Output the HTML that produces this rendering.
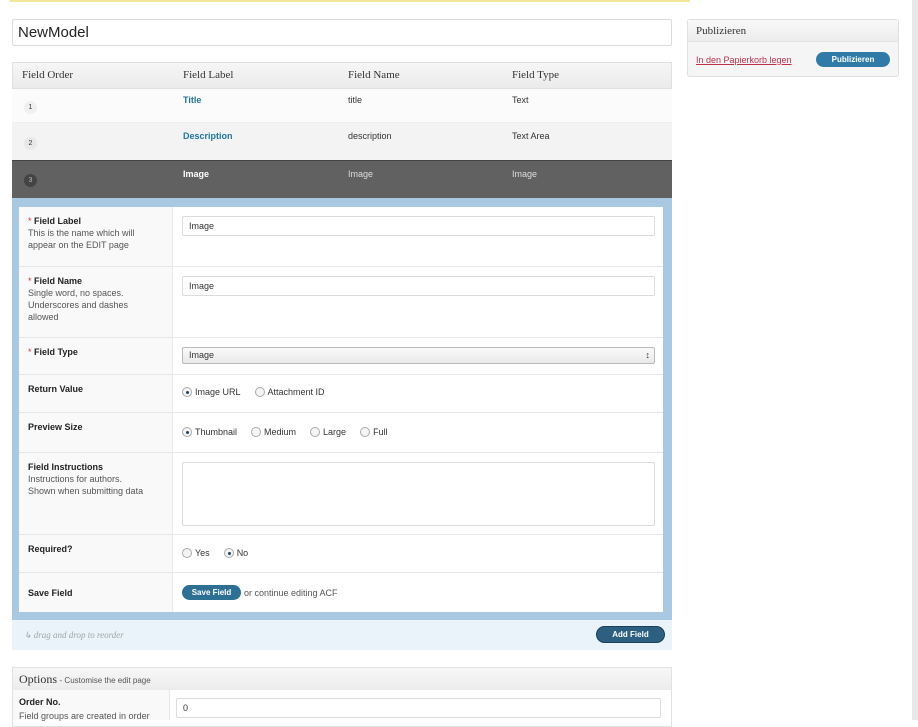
<!DOCTYPE html>
<html><head><meta charset="utf-8"><style>
*{box-sizing:border-box;margin:0;padding:0}
body{width:918px;height:720px;overflow:hidden;background:#fff;font-family:"Liberation Sans",sans-serif;font-size:9px;color:#333;position:relative}
.a{position:absolute}
.serif{font-family:"Liberation Serif",serif}
.inp{position:absolute;background:#fff;border:1px solid #dcdcdc;border-radius:2px;padding-left:6px;font-size:9px;color:#333}
.row{position:absolute;left:19px;width:644px;border-bottom:1px solid #e6e6e6;background:#fff}
.row .l{position:absolute;left:0;top:0;bottom:0;width:154px;background:#f9f9f9;border-right:1px solid #e9e9e9;padding:8px 24px 8px 9px;color:#555;line-height:12px}
.row .l b{color:#222;font-size:9px}
.st{color:#c33}
.rad{display:inline-block;width:10px;height:10px;border:1px solid #aaa;border-radius:50%;vertical-align:-2px;margin-right:3px;background:#f4f4f4;position:relative}
.rad.on::after{content:"";position:absolute;left:3px;top:3px;width:3px;height:3px;border-radius:50%;background:#246}
.opts{position:absolute;left:182px;font-size:9px;color:#333}
.opts span{margin-right:14px}
</style></head><body>
<div class="a" style="left:10px;top:0;width:680px;height:2px;background:#f2e69a"></div>
<div class="a" style="left:912px;top:0;width:6px;height:720px;background:#e8e8e8"></div>
<div class="inp" style="left:12px;top:19px;width:660px;height:27px;font-size:15px;line-height:25px;padding-left:5px;color:#222">NewModel</div>

<div class="a" style="left:12px;top:62px;width:660px;height:27px;background:linear-gradient(#f6f6f6,#ebebeb);border:1px solid #e0e0e0"></div>
<div class="a serif" style="left:22px;top:69px;font-size:11px;color:#333">Field Order</div>
<div class="a serif" style="left:183px;top:69px;font-size:11px;color:#333">Field Label</div>
<div class="a serif" style="left:348px;top:69px;font-size:11px;color:#333">Field Name</div>
<div class="a serif" style="left:512px;top:69px;font-size:11px;color:#333">Field Type</div>

<div class="a" style="left:12px;top:89px;width:660px;height:34px;background:#fbfbfb;border-bottom:1px solid #eee"></div>
<div class="a" style="left:24px;top:101px;width:13px;height:13px;border-radius:50%;background:#f0f0f0;font-size:7px;text-align:center;line-height:13px">1</div>
<div class="a" style="left:183px;top:95px;color:#21759b;font-weight:bold">Title</div>
<div class="a" style="left:348px;top:95px">title</div>
<div class="a" style="left:512px;top:95px">Text</div>

<div class="a" style="left:12px;top:123px;width:660px;height:37px;background:#f3f3f3"></div>
<div class="a" style="left:24px;top:137px;width:13px;height:13px;border-radius:50%;background:#e8e8e8;font-size:7px;text-align:center;line-height:13px">2</div>
<div class="a" style="left:183px;top:131px;color:#21759b;font-weight:bold">Description</div>
<div class="a" style="left:348px;top:131px">description</div>
<div class="a" style="left:512px;top:131px">Text Area</div>

<div class="a" style="left:12px;top:160px;width:660px;height:38px;background:#616161;border-top:1px solid #444"></div>
<div class="a" style="left:24px;top:174px;width:13px;height:13px;border-radius:50%;background:#444;color:#bbb;font-size:7px;text-align:center;line-height:13px">3</div>
<div class="a" style="left:183px;top:169px;color:#fff;font-weight:bold">Image</div>
<div class="a" style="left:348px;top:169px;color:#ddd">Image</div>
<div class="a" style="left:512px;top:169px;color:#ddd">Image</div>

<div class="a" style="left:12px;top:198px;width:660px;height:422px;background:#a9c9e2"></div>
<div class="a" style="left:19px;top:207px;width:644px;height:405px;background:#fff"></div>

<div class="row" style="top:207px;height:60px"><div class="l"><span class="st">*</span> <b>Field Label</b><br>This is the name which will appear on the EDIT page</div></div>
<div class="inp" style="left:182px;top:216px;width:473px;height:20px;line-height:18px">Image</div>
<div class="row" style="top:267px;height:71px"><div class="l"><span class="st">*</span> <b>Field Name</b><br>Single word, no spaces. Underscores and dashes allowed</div></div>
<div class="inp" style="left:182px;top:276px;width:473px;height:20px;line-height:18px">Image</div>
<div class="row" style="top:338px;height:37px"><div class="l"><span class="st">*</span> <b>Field Type</b></div></div>
<div class="inp" style="left:182px;top:347px;width:473px;height:17px;line-height:15px;background:linear-gradient(#fafafa,#e9e9e9);border-color:#bbb">Image<span style="position:absolute;right:4px;top:0">&#8597;</span></div>
<div class="row" style="top:375px;height:38px"><div class="l"><b>Return Value</b></div></div>
<div class="opts" style="top:387px"><span><i class="rad on"></i>Image URL</span><span><i class="rad"></i>Attachment ID</span></div>
<div class="row" style="top:413px;height:40px"><div class="l"><b>Preview Size</b></div></div>
<div class="opts" style="top:427px"><span><i class="rad on"></i>Thumbnail</span><span><i class="rad"></i>Medium</span><span><i class="rad"></i>Large</span><span><i class="rad"></i>Full</span></div>
<div class="row" style="top:453px;height:82px"><div class="l"><b>Field Instructions</b><br>Instructions for authors. Shown when submitting data</div></div>
<div class="inp" style="left:182px;top:462px;width:473px;height:64px"></div>
<div class="row" style="top:535px;height:38px"><div class="l"><b>Required?</b></div></div>
<div class="opts" style="top:548px"><span><i class="rad"></i>Yes</span><span><i class="rad on"></i>No</span></div>
<div class="row" style="top:573px;height:39px;border-bottom:none"><div class="l" style="padding-top:14px"><b>Save Field</b></div></div>
<div class="a" style="left:182px;top:585px;width:59px;height:15px;border-radius:8px;background:#2e6f94;color:#fff;font-weight:bold;font-size:8px;text-align:center;line-height:15px">Save Field</div>
<div class="a" style="left:244px;top:588px;color:#555">or continue editing ACF</div>

<div class="a" style="left:12px;top:620px;width:660px;height:30px;background:#eaf2fa"></div>
<div class="a serif" style="left:24px;top:630px;color:#9aa;font-style:italic;font-size:9px">&#8627; drag and drop to reorder</div>
<div class="a" style="left:596px;top:626px;width:69px;height:17px;border-radius:9px;background:#2d5f80;border:1px solid #1b3f58;color:#fff;font-weight:bold;font-size:8px;text-align:center;line-height:15px">Add Field</div>

<div class="a" style="left:12px;top:667px;width:660px;height:60px;border:1px solid #e2e2e2"></div>
<div class="a" style="left:13px;top:668px;width:658px;height:22px;background:linear-gradient(#f7f7f7,#ececec)"></div>
<div class="a" style="left:19px;top:672px"><span class="serif" style="font-size:12px;color:#333">Options</span> <span style="font-size:8px;color:#555">- Customise the edit page</span></div>
<div class="a" style="left:13px;top:690px;width:157px;height:30px;background:#f9f9f9;border-right:1px solid #e6e6e6"></div>
<div class="a" style="left:19px;top:697px;font-weight:bold;color:#222;font-size:9px">Order No.</div>
<div class="a" style="left:19px;top:711px;color:#555">Field groups are created in order</div>
<div class="inp" style="left:176px;top:698px;width:485px;height:20px;line-height:18px">0</div>

<div class="a" style="left:687px;top:19px;width:212px;height:58px;border:1px solid #dfdfdf;border-radius:3px;background:#f5f5f5"></div>
<div class="a" style="left:688px;top:20px;width:210px;height:22px;background:linear-gradient(#f9f9f9,#ececec);border-bottom:1px solid #e2e2e2"></div>
<div class="a serif" style="left:696px;top:25px;font-size:11px;color:#333">Publizieren</div>
<div class="a" style="left:696px;top:55px;color:#c0304a;text-decoration:underline;font-size:9px">In den Papierkorb legen</div>
<div class="a" style="left:816px;top:52px;width:74px;height:15px;border-radius:8px;background:#2f7aa6;color:#fff;font-weight:bold;font-size:8px;text-align:center;line-height:15px">Publizieren</div>
</body></html>
